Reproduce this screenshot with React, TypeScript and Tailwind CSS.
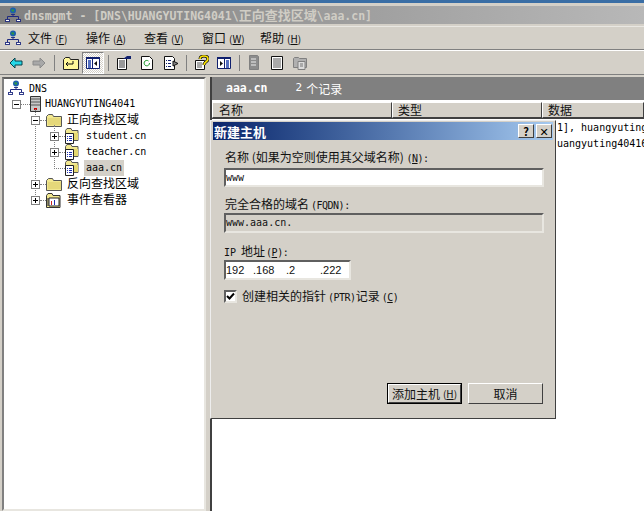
const mono = "font-['DejaVu_Sans_Mono','Noto_Sans_CJK_SC',monospace]";

function Raised({ className = '', children }: { className?: string; children?: React.ReactNode }) {
  return (
    <div className={`border border-t-white border-l-white border-r-[#404040] border-b-[#404040] bg-[#d4d0c8] ${className}`}>
      {children}
    </div>
  );
}

function Sunken({ className = '', children }: { className?: string; children?: React.ReactNode }) {
  return (
    <div className={`border-2 border-t-[#5f5f5f] border-l-[#5f5f5f] border-r-[#e8e6e0] border-b-[#e8e6e0] ${className}`}>
      {children}
    </div>
  );
}

// latin runs in the old bitmap font are narrower than the CJK ones
function Lat({ children, className = 'text-[10px] tracking-[-0.5px]' }: { children: React.ReactNode; className?: string }) {
  return <span className={`${mono} ${className}`}>{children}</span>;
}

function NetIcon() {
  return (
    <svg width="16" height="16" viewBox="0 0 16 16" className="shrink-0">
      <circle cx="8" cy="3.5" r="3" fill="#1c5fae" />
      <path d="M6 2.500h3v2H7z" fill="#2f9a3c" />
      <path d="M8 7v2M2.500 12V9.500h11V12" stroke="#1f2a80" fill="none" />
      <path d="M0 12h5v3H0zM6 7h4v1H6zM11 12h5v3h-5z" fill="#1f2a80" opacity="0.9" />
      <path d="M1 13h3v1H1zM12 13h3v1h-3z" fill="#fff" />
    </svg>
  );
}

function ServerIcon() {
  return (
    <svg width="11" height="16" viewBox="0 0 11 16" className="shrink-0">
      <path d="M.5.500h10v15H.5z" fill="#c8c8c8" stroke="#333" />
      <path d="M1 3h9M1 6h9M1 9h9" stroke="#555" />
      <path d="M4 12h3v2H4z" fill="#c00" />
    </svg>
  );
}

function FolderIcon() {
  return (
    <svg width="16" height="14" viewBox="0 0 16 14" className="shrink-0">
      <path d="M.5 3.500l2-2h4l1 2h8v10H.5z" fill="#f2e88f" stroke="#555" />
      <path d="M2 5h13v7H2z" fill="#e5d87a" />
    </svg>
  );
}

function ZoneIcon() {
  return (
    <svg width="14" height="16" viewBox="0 0 14 16" className="shrink-0">
      <path d="M.5 2.500l1.500-2h4l1 2h6v10H.5z" fill="#f2e88f" stroke="#555" />
      <path d="M1 5h12v7H1z" fill="#e6d96f" />
      <path d="M.5 5.500h8v10h-8z" fill="#fff" stroke="#222" />
      <path d="M2 8h1v1H2zM4 8h3v1H4zM2 10h1v1H2zM4 10h3v1H4zM2 12h1v1H2zM4 12h3v1H4z" fill="#1d2fb0" />
    </svg>
  );
}

function EventIcon() {
  return (
    <svg width="15" height="15" viewBox="0 0 15 15" className="shrink-0">
      <path d="M.5 2.500l1.500-2h4l1 2h7v12H.5z" fill="#f2e88f" stroke="#333" />
      <path d="M3 5h10v8H3z" fill="#fff" stroke="#222" />
      <path d="M5 8h1v4H5z" fill="#c22" />
      <path d="M8 7h1v5H8z" fill="#1d2fb0" />
      <path d="M1 5h2v8H1z" fill="#444" opacity="0.6" />
    </svg>
  );
}

function Expander({ open }: { open?: boolean }) {
  return (
    <div className="w-[9px] h-[9px] border border-[#808080] bg-white relative shrink-0">
      <div className="absolute left-[1px] top-[3px] w-[5px] h-px bg-black" />
      {!open && <div className="absolute left-[3px] top-[1px] w-px h-[5px] bg-black" />}
    </div>
  );
}

function TreeRow({ indent, dots, gap, open, leaf, icon, label, latin, selected }: {
  indent: string;
  dots: string;
  gap: string;
  open?: boolean;
  leaf?: boolean;
  icon: React.ReactNode;
  label: string;
  latin?: boolean;
  selected?: boolean;
}) {
  return (
    <div className={`flex items-center h-4 ${indent}`}>
      {leaf ? <div className="w-[4px] shrink-0" /> : <Expander open={open} />}
      <div className={`${dots} border-t border-dotted border-[#808080] shrink-0`} />
      {icon}
      <span className={`${gap} px-[2px] leading-4 text-black whitespace-nowrap ${latin ? 'text-[10px]' : 'text-[12px]'} ${selected ? 'bg-[#d4d0c8]' : ''}`}>{label}</span>
    </div>
  );
}

function Tree() {
  return (
    <div className={`relative shrink-0 w-[204px] h-full bg-white border-2 border-t-[#606060] border-l-[#808080] border-r-[#e8e6e0] border-b-[#e8e6e0] pt-[1px] pl-[3px] ${mono}`}>
      <div className="absolute left-[31px] top-[30px] h-[86px] border-l border-dotted border-[#808080]" />
      <div className="absolute left-[50px] top-[46px] h-[42px] border-l border-dotted border-[#808080]" />
      <div className="flex items-center h-4 pl-[1px] text-[10px]">
        <NetIcon />
        <span className="ml-[5px] text-black">DNS</span>
      </div>
      <TreeRow indent="pl-[5px]" dots="w-[9px]" gap="ml-[2px]" open latin icon={<ServerIcon />} label="HUANGYUTING4041" />
      <TreeRow indent="pl-[24px]" dots="w-[6px]" gap="ml-[3px]" open icon={<FolderIcon />} label="正向查找区域" />
      <TreeRow indent="pl-[43px]" dots="w-[6px]" gap="ml-[5px]" latin icon={<ZoneIcon />} label="student.cn" />
      <TreeRow indent="pl-[43px]" dots="w-[6px]" gap="ml-[5px]" latin icon={<ZoneIcon />} label="teacher.cn" />
      <TreeRow indent="pl-[43px]" dots="w-[11px]" gap="ml-[5px]" leaf latin selected icon={<ZoneIcon />} label="aaa.cn" />
      <TreeRow indent="pl-[24px]" dots="w-[6px]" gap="ml-[3px]" icon={<FolderIcon />} label="反向查找区域" />
      <TreeRow indent="pl-[24px]" dots="w-[6px]" gap="ml-[4px]" icon={<EventIcon />} label="事件查看器" />
    </div>
  );
}

function ToolbarIcons() {
  return (
    <div className="flex items-center h-[22px] pl-[9px]">
      <svg width="14" height="12" viewBox="0 0 14 12" className="shrink-0"><path d="M1 6l5-5v3h7v4H6v3z" fill="#26d7e6" stroke="#06404a" /></svg>
      <svg width="14" height="12" viewBox="0 0 14 12" className="ml-[9px] shrink-0"><path d="M13 6L8 1v3H1v4h7v3z" fill="#a8a8a8" stroke="#8a8a8a" /></svg>
      <div className="w-px h-[16px] bg-[#808080] ml-[8px]" />
      <svg width="16" height="14" viewBox="0 0 16 14" className="ml-[8px] shrink-0"><path d="M.5 3.500l2-2h4l1 2h8v10H.5z" fill="#fff799" stroke="#222" /><path d="M5 6L3 8l2 2M3 8h7V5" stroke="#111" fill="none" /></svg>
      <div className="ml-[3px] w-[22px] h-[22px] bg-[repeating-conic-gradient(#ffffff_0_25%,#d4d0c8_0_50%)] bg-[length:2px_2px] border border-t-[#808080] border-l-[#808080] border-r-white border-b-white flex items-center justify-center">
        <svg width="14" height="12" viewBox="0 0 14 12"><path d="M.5.500h13v11H.5z" fill="#fff" stroke="#10206e" /><path d="M0 0h14v2H0z" fill="#10206e" /><path d="M2 3h3v8H2z" fill="#5570c0" /><path d="M6 2h1v9H6z" fill="#10206e" /><path d="M11 4L8 6.500 11 9z" fill="#111" /></svg>
      </div>
      <div className="w-px h-[16px] bg-[#808080] ml-[4px]" />
      <svg width="16" height="15" viewBox="0 0 16 15" className="ml-[7px] shrink-0"><path d="M1.500 3.500h9v11h-9z" fill="#fff" stroke="#111" /><path d="M3 6h6M3 8h6M3 10h6M3 12h6" stroke="#333" /><path d="M7 4l4-3h4v3h-5z" fill="#10206e" /></svg>
      <svg width="12" height="14" viewBox="0 0 12 14" className="ml-[9px] shrink-0"><path d="M.5.500h8l3 3v10H.5z" fill="#fff" stroke="#111" /><path d="M8.500 7a2.700 2.700 0 1 1-1-2" fill="none" stroke="#1a9a2a" /></svg>
      <svg width="15" height="14" viewBox="0 0 15 14" className="ml-[11px] shrink-0"><path d="M.5.500h8l2 2v11H.5z" fill="#fff" stroke="#111" /><path d="M2 4h1v1H2zM4 4h3v1H4zM2 7h1v1H2zM4 7h3v1H4zM2 10h1v1H2zM4 10h3v1H4z" fill="#10206e" /><path d="M9 5v5l5-2.500z" fill="#888" stroke="#111" /></svg>
      <div className="w-px h-[16px] bg-[#808080] ml-[7px]" />
      <svg width="14" height="15" viewBox="0 0 14 15" className="ml-[8px] shrink-0"><path d="M.5 5.500h9v9h-9z" fill="#fff" stroke="#111" /><path d="M2 8h5M2 10h5M2 12h5" stroke="#555" /><path d="M5 4c0-4 8-4 8 0 0 3-4 2.500-4 6" stroke="#111" strokeWidth="3" fill="none" /><path d="M5 4c0-4 8-4 8 0 0 3-4 2.500-4 6" stroke="#ffe600" strokeWidth="1.600" fill="none" /></svg>
      <svg width="14" height="12" viewBox="0 0 14 12" className="ml-[8px] shrink-0"><path d="M.5.500h13v11H.5z" fill="#fff" stroke="#10206e" /><path d="M0 0h14v2H0z" fill="#10206e" /><path d="M9 3h3v8H9z" fill="#5570c0" /><path d="M7 2h1v9H7z" fill="#10206e" /><path d="M3 4l3 2.500L3 9z" fill="#111" /></svg>
      <div className="w-px h-[16px] bg-[#808080] ml-[8px]" />
      <svg width="10" height="15" viewBox="0 0 10 15" className="ml-[9px] shrink-0"><path d="M.5.500h8l1 1v13H.5z" fill="#8c8c8c" stroke="#808080" /><path d="M2 4h5M2 7h5M2 10h5" stroke="#eee" /></svg>
      <svg width="12" height="15" viewBox="0 0 12 15" className="ml-[12px] shrink-0"><path d="M.5 1.500h11v13H.5z" fill="#fff" stroke="#111" /><path d="M2 4h8M2 6h8M2 8h8M2 10h8M2 12h8" stroke="#555" /></svg>
      <svg width="16" height="14" viewBox="0 0 16 14" className="ml-[10px] shrink-0"><path d="M.5 2.500l1-1h4l1 1h7v9H.5z" fill="#b0b0b0" stroke="#808080" /><path d="M5 5.500h7v8H5z" fill="#dcdcdc" stroke="#808080" /><path d="M7 8h3M7 10h3" stroke="#777" /></svg>
    </div>
  );
}

function MenuItem({ label, hot }: { label: string; hot: string }) {
  return (
    <span className="w-[58px] text-[12px] text-[#111] whitespace-nowrap">
      {label}
      <span className="ml-[3px] text-[10px]">(<span className="underline">{hot}</span>)</span>
    </span>
  );
}

function Dialog() {
  return (
    <div className="absolute left-[210px] top-[120px] w-[346px] h-[299px] bg-[#d4d0c8] border border-t-[#eeeeee] border-l-[#eeeeee] border-r-[#404040] border-b-[#404040] pt-[1px] px-[2px] pb-[2px] flex flex-col">
      <div className="h-[18px] shrink-0 bg-gradient-to-r from-[#0a246a] to-[#a6caf0] flex items-center pl-[1px] pr-[1px]">
        <span className="text-[13px] font-bold text-white flex-1 leading-none">新建主机</span>
        <div className="flex gap-[2px]">
          <Raised className="w-[16px] h-[14px] flex items-center justify-center text-[11px] font-bold text-black leading-none">?</Raised>
          <Raised className="w-[16px] h-[14px] flex items-center justify-center text-[11px] font-bold text-black leading-none">✕</Raised>
        </div>
      </div>
      <div className="flex-1 pl-[11px] pr-[9px] pt-[9px] flex flex-col text-[12px] text-[#111]">
        <div className="ml-px leading-[16px] h-[16px] whitespace-nowrap">名称 (如果为空则使用其父域名称) <Lat>(<span className="underline">N</span>):</Lat></div>
        <Sunken className={`mt-[3px] h-[19px] bg-white pl-[0px] leading-[15px] text-[10px] ${mono}`}>www</Sunken>
        <div className="ml-px mt-[9px] leading-[16px] h-[16px] whitespace-nowrap">完全合格的域名<Lat className="ml-[2px] text-[10px] tracking-[-0.5px]">(FQDN):</Lat></div>
        <Sunken className={`mt-[1px] h-[20px] bg-[#d4d0c8] pl-[0px] leading-[15px] text-[10px] ${mono}`}>www.aaa.cn.</Sunken>
        <div className="mt-[10px] leading-[16px] h-[16px] whitespace-nowrap"><Lat className="text-[10px]">IP</Lat><span className="ml-[5px]">地址</span><Lat className="ml-px text-[10px] tracking-[-0.5px]">(<span className="underline">P</span>):</Lat></div>
        <Sunken className="mt-[1px] h-[20px] w-[127px] bg-white flex items-center text-[11px] font-['Liberation_Sans',sans-serif]">
          <span className="w-[27px] shrink-0">192</span><span className="w-[33px] shrink-0">.168</span><span className="w-[34px] shrink-0">.2</span><span>.222</span>
        </Sunken>
        <div className="mt-[8px] flex items-center h-[16px]">
          <Sunken className="w-[13px] h-[13px] bg-white flex items-center justify-center">
            <svg width="9" height="9" viewBox="0 0 9 9"><path d="M1 4l2.500 2.500L8 1.500" stroke="#000" strokeWidth="2" fill="none" /></svg>
          </Sunken>
          <span className="ml-[5px] whitespace-nowrap">创建相关的指针<Lat className="ml-[2px] text-[10px] tracking-[-0.5px]">(PTR)</Lat>记录<Lat className="ml-[2px] text-[10px] tracking-[-0.5px]">(<span className="underline">C</span>)</Lat></span>
        </div>
        <div className="mt-auto pb-[12px] flex justify-end gap-[6px] pr-px">
          <div className="border border-black">
            <Raised className="w-[73px] h-[19px] flex items-center justify-center whitespace-nowrap">添加主机<span className="ml-[3px] text-[10px]">(<span className="underline">H</span>)</span></Raised>
          </div>
          <Raised className="w-[75px] h-[21px] flex items-center justify-center">取消</Raised>
        </div>
      </div>
    </div>
  );
}

export default function App() {
  return (
    <div className="relative w-[644px] h-[511px] overflow-hidden bg-[#d4d0c8] font-['Noto_Sans_CJK_SC','DejaVu_Sans',sans-serif]">
      <div className="h-[3px] bg-[#3a6ea5]" />
      <div className="h-[3px] bg-[#d4d0c8]" />
      <div className="h-[18px] bg-gradient-to-r from-[#808080] to-[#b8b8b8] flex items-center pl-[5px] gap-[3px]">
        <NetIcon />
        <span className="text-[13px] font-bold text-[#d0cdc5] whitespace-nowrap leading-none">
          <Lat className="text-[11.5px]">dnsmgmt - [DNS\HUANGYUTING4041\</Lat>正向查找区域<Lat className="text-[11.5px]">\aaa.cn]</Lat>
        </span>
      </div>
      <div className="h-[3px] border-b border-[#e9e7e2]" />
      <div className="h-[23px] border-b border-[#808080] flex items-center pl-[5px]">
        <NetIcon />
        <div className="flex ml-[7px]">
          <MenuItem label="文件" hot="F" />
          <MenuItem label="操作" hot="A" />
          <MenuItem label="查看" hot="V" />
          <MenuItem label="窗口" hot="W" />
          <MenuItem label="帮助" hot="H" />
        </div>
      </div>
      <div className="h-[25px] border-t border-white border-b border-b-[#808080] flex items-center">
        <ToolbarIcons />
      </div>
      <div className="flex h-[436px] pt-[2px] pl-[2px]">
        <Tree />
        <div className="w-[4px] shrink-0" />
        <div className="flex-1 min-w-0 flex flex-col border-l-2 border-l-[#404040]">
          <div className="h-[23px] bg-[#808080] flex items-center pl-[14px] text-white">
            <Lat className="font-bold text-[11.5px]">aaa.cn</Lat>
            <Lat className="ml-[28px] text-[11px]">2</Lat>
            <span className="ml-[4px] text-[12px]">个记录</span>
          </div>
          <div className="h-[2px] bg-white" />
          <div className="flex h-[16px] text-[12px] text-[#111]">
            <Raised className="w-[180px] shrink-0 pl-[6px] leading-[14px]">名称</Raised>
            <Raised className="w-[150px] shrink-0 pl-[5px] leading-[14px]">类型</Raised>
            <Raised className="flex-1 pl-[5px] leading-[14px]">数据</Raised>
          </div>
          <div className={`flex-1 bg-white border-t border-[#404040] pl-[345px] pt-[1px] text-[10px] text-black overflow-hidden ${mono}`}>
            <div className="h-[16px] leading-[16px] whitespace-nowrap">1], huangyuting</div>
            <div className="h-[16px] leading-[16px] whitespace-nowrap">uangyuting40416</div>
          </div>
        </div>
      </div>
      <Dialog />
    </div>
  );
}
